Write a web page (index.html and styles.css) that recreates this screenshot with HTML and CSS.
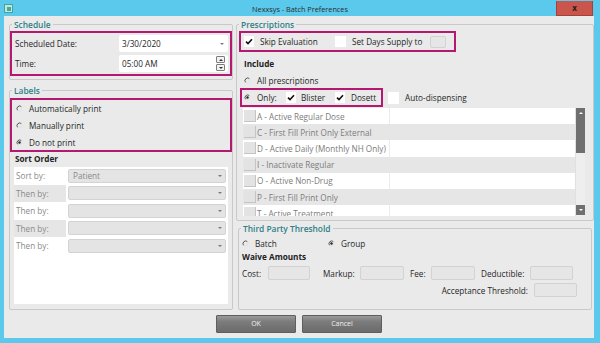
FILE: index.html
```html
<!DOCTYPE html>
<html>
<head>
<meta charset="utf-8">
<title>Nexxsys - Batch Preferences</title>
<link rel="stylesheet" href="styles.css">
</head>
<body>
<div class="window">
  <div class="titlebar">
    <div class="tb-left"><span class="app-icon"><span class="app-icon-inner"></span></span></div>
    <div class="title">Nexxsys - Batch Preferences</div>
    <div class="tb-right"><span class="close">x</span></div>
  </div>
  <div class="client">
    <div class="columns">
      <div class="col col-left">
        <fieldset class="group group-schedule">
          <legend>Schedule</legend>
          <div class="hl hl-schedule">
            <div class="field-row">
              <span class="field-label">Scheduled Date:</span>
              <div class="combo-white"><span class="combo-text">3/30/2020</span><i class="caret"></i></div>
            </div>
            <div class="field-row">
              <span class="field-label">Time:</span>
              <div class="combo-white"><span class="combo-text">05:00 AM</span>
                <span class="spin"><span class="spin-btn"><i class="tri-up"></i></span><span class="spin-btn"><i class="tri-down"></i></span></span>
              </div>
            </div>
          </div>
        </fieldset>
        <fieldset class="group group-labels">
          <legend>Labels</legend>
          <div class="hl hl-labels">
            <div class="radio-row"><svg class="radio" width="7" height="7" viewBox="0 0 7 7"><path d="M1.6 5.4 A2.7 2.7 0 0 1 5.4 1.6" stroke="#555" stroke-width="1" fill="none"/><path d="M5.4 1.6 A2.7 2.7 0 0 1 1.6 5.4" stroke="#e0e0e0" stroke-width="1" fill="none"/></svg><span>Automatically print</span></div>
            <div class="radio-row"><svg class="radio" width="7" height="7" viewBox="0 0 7 7"><path d="M1.6 5.4 A2.7 2.7 0 0 1 5.4 1.6" stroke="#555" stroke-width="1" fill="none"/><path d="M5.4 1.6 A2.7 2.7 0 0 1 1.6 5.4" stroke="#e0e0e0" stroke-width="1" fill="none"/></svg><span>Manually print</span></div>
            <div class="radio-row"><svg class="radio" width="7" height="7" viewBox="0 0 7 7"><path d="M1.6 5.4 A2.7 2.7 0 0 1 5.4 1.6" stroke="#555" stroke-width="1" fill="none"/><path d="M5.4 1.6 A2.7 2.7 0 0 1 1.6 5.4" stroke="#e0e0e0" stroke-width="1" fill="none"/><circle cx="3.5" cy="3.5" r="1.2" fill="#222"/></svg><span>Do not print</span></div>
          </div>
          <div class="bold-title sort-title">Sort Order</div>
          <div class="sort-table">
            <div class="sort-row"><span class="sort-label">Sort by:</span><div class="combo-gray"><span class="combo-text">Patient</span><i class="caret"></i></div></div>
            <div class="sort-row alt"><span class="sort-label">Then by:</span><div class="combo-gray"><span class="combo-text"></span><i class="caret"></i></div></div>
            <div class="sort-row"><span class="sort-label">Then by:</span><div class="combo-gray"><span class="combo-text"></span><i class="caret"></i></div></div>
            <div class="sort-row alt"><span class="sort-label">Then by:</span><div class="combo-gray"><span class="combo-text"></span><i class="caret"></i></div></div>
            <div class="sort-row"><span class="sort-label">Then by:</span><div class="combo-gray"><span class="combo-text"></span><i class="caret"></i></div></div>
          </div>
        </fieldset>
      </div>
      <div class="col col-right">
        <fieldset class="group group-rx">
          <legend>Prescriptions</legend>
          <div class="hl hl-rx1">
            <div class="opt opt-skip"><span class="check"><svg width="8" height="7" viewBox="0 0 8 7"><path d="M1 3.6 L3 5.6 L7 1.2" stroke="#111" stroke-width="1.6" fill="none"/></svg></span><span>Skip Evaluation</span></div>
            <div class="opt"><span class="check check-empty"></span><span>Set Days Supply to</span></div>
            <span class="days-input"></span>
          </div>
          <div class="bold-title include-title">Include</div>
          <div class="radio-row all-row"><svg class="radio" width="7" height="7" viewBox="0 0 7 7"><path d="M1.6 5.4 A2.7 2.7 0 0 1 5.4 1.6" stroke="#555" stroke-width="1" fill="none"/><path d="M5.4 1.6 A2.7 2.7 0 0 1 1.6 5.4" stroke="#e0e0e0" stroke-width="1" fill="none"/></svg><span>All prescriptions</span></div>
          <div class="only-line">
            <div class="hl hl-rx2">
              <div class="opt opt-only"><svg class="radio" width="7" height="7" viewBox="0 0 7 7"><path d="M1.6 5.4 A2.7 2.7 0 0 1 5.4 1.6" stroke="#555" stroke-width="1" fill="none"/><path d="M5.4 1.6 A2.7 2.7 0 0 1 1.6 5.4" stroke="#e0e0e0" stroke-width="1" fill="none"/><circle cx="3.5" cy="3.5" r="1.2" fill="#222"/></svg><span>Only:</span></div>
              <div class="opt opt-blister"><span class="check"><svg width="8" height="7" viewBox="0 0 8 7"><path d="M1 3.6 L3 5.6 L7 1.2" stroke="#111" stroke-width="1.6" fill="none"/></svg></span><span>Blister</span></div>
              <div class="opt opt-dosett"><span class="check"><svg width="8" height="7" viewBox="0 0 8 7"><path d="M1 3.6 L3 5.6 L7 1.2" stroke="#111" stroke-width="1.6" fill="none"/></svg></span><span>Dosett</span></div>
            </div>
            <div class="opt opt-auto"><span class="check check-empty check-big"></span><span>Auto-dispensing</span></div>
          </div>
          <div class="listbox">
            <div class="list-rows">
              <div class="list-row"><span class="list-cell"><span class="row-box"></span>A - Active Regular Dose</span></div>
              <div class="list-row alt"><span class="list-cell"><span class="row-box"></span>C - First Fill Print Only External</span></div>
              <div class="list-row"><span class="list-cell"><span class="row-box"></span>D - Active Daily (Monthly NH Only)</span></div>
              <div class="list-row alt"><span class="list-cell"><span class="row-box"></span>I - Inactivate Regular</span></div>
              <div class="list-row"><span class="list-cell"><span class="row-box"></span>O - Active Non-Drug</span></div>
              <div class="list-row alt"><span class="list-cell"><span class="row-box"></span>P - First Fill Print Only</span></div>
              <div class="list-row"><span class="list-cell"><span class="row-box"></span>T - Active Treatment</span></div>
            </div>
            <div class="scrollbar">
              <div class="thumb"><i class="tri-up white"></i></div>
              <div class="track"></div>
              <div class="sb-down"><i class="tri-down white"></i></div>
            </div>
          </div>
        </fieldset>
        <fieldset class="group group-tp">
          <legend>Third Party Threshold</legend>
          <div class="tp-radios">
            <div class="radio-row tp-batch"><svg class="radio" width="7" height="7" viewBox="0 0 7 7"><path d="M1.6 5.4 A2.7 2.7 0 0 1 5.4 1.6" stroke="#555" stroke-width="1" fill="none"/><path d="M5.4 1.6 A2.7 2.7 0 0 1 1.6 5.4" stroke="#e0e0e0" stroke-width="1" fill="none"/></svg><span>Batch</span></div>
            <div class="radio-row"><svg class="radio" width="7" height="7" viewBox="0 0 7 7"><path d="M1.6 5.4 A2.7 2.7 0 0 1 5.4 1.6" stroke="#555" stroke-width="1" fill="none"/><path d="M5.4 1.6 A2.7 2.7 0 0 1 1.6 5.4" stroke="#e0e0e0" stroke-width="1" fill="none"/><circle cx="3.5" cy="3.5" r="1.2" fill="#222"/></svg><span>Group</span></div>
          </div>
          <div class="bold-title waive-title">Waive Amounts</div>
          <div class="amount-row">
            <span class="amt-label w-cost">Cost:</span><span class="amt-input w42"></span>
            <span class="amt-label w-markup">Markup:</span><span class="amt-input w44"></span>
            <span class="amt-label w-fee">Fee:</span><span class="amt-input w44"></span>
            <span class="amt-label w-ded">Deductible:</span><span class="amt-input w43"></span>
          </div>
          <div class="amount-row accept-row">
            <span class="amt-label accept-label">Acceptance Threshold:</span><span class="amt-input w43"></span>
          </div>
        </fieldset>
      </div>
    </div>
    <div class="buttons">
      <span class="btn">OK</span>
      <span class="btn">Cancel</span>
    </div>
  </div>
</div>
</body>
</html>
```

FILE: styles.css
```css
html, body {
  margin: 0;
  padding: 0;
}
body {
  font-family: "Open Sans", "Noto Sans", sans-serif;
  font-size: 8.2px;
  color: #262626;
  background: #5bc9eb;
}
.window {
  width: 600px;
  height: 343px;
  background: #5bc9eb;
  display: flex;
  flex-direction: column;
  overflow: hidden;
}
.titlebar {
  height: 16px;
  display: grid;
  grid-template-columns: 1fr auto 1fr;
  align-items: center;
}
.tb-left {
  display: flex;
  align-items: center;
  padding-left: 4px;
}
.app-icon {
  width: 9px;
  height: 9px;
  box-sizing: border-box;
  border: 1px solid #4f9e9a;
  background: #b9ece0;
  display: flex;
  align-items: center;
  justify-content: center;
}
.app-icon-inner {
  width: 4px;
  height: 4px;
  background: #4aa79c;
}
.title {
  font-size: 7.3px;
  color: #2b2b2b;
  line-height: 16px;
  padding-top: 1px;
}
.tb-right {
  display: flex;
  justify-content: flex-end;
  align-items: flex-start;
  height: 16px;
  padding-right: 7px;
}
.close {
  width: 37px;
  height: 15px;
  box-sizing: border-box;
  background: #c9554c;
  border: 1px solid #a2423a;
  border-top: none;
  color: #1d1d1d;
  font-weight: 700;
  font-size: 8px;
  line-height: 14px;
  text-align: center;
}
.client {
  flex: 1;
  margin: 0 6px 5px 4px;
  background: #eaeaea;
  padding: 3px 0 0 5px;
  display: flex;
  flex-direction: column;
  min-height: 0;
}
.columns {
  flex: 1;
  display: flex;
  gap: 3px;
  min-height: 0;
}
.col {
  display: flex;
  flex-direction: column;
}
.col-left {
  width: 224px;
}
.col-right {
  width: 358px;
}
.group {
  margin: 0;
  padding: 0;
  min-width: 0;
  border: 1px solid #c9c9c9;
  border-radius: 2px;
  display: flex;
  flex-direction: column;
}
.group > legend {
  padding: 0 2px;
  margin-left: 2px;
  font-size: 8.4px;
  font-weight: 600;
  color: #2e7f87;
  line-height: 11px;
  height: 11px;
}
.group.group-schedule {
  flex: none;
}
.hl {
  border: 2px solid #b5186e;
}
.hl-schedule {
  margin: 1px 0 3px;
  height: 45px;
  flex: none;
  box-sizing: border-box;
  padding: 0 2px 0 3px;
  display: flex;
  flex-direction: column;
  justify-content: center;
  gap: 3px;
}
.field-row {
  display: flex;
  align-items: center;
  height: 17px;
  flex: none;
}
.field-label {
  flex: 1;
}
.combo-white {
  width: 109px;
  height: 17px;
  box-sizing: border-box;
  background: #fff;
  border-radius: 2px;
  display: flex;
  align-items: center;
  padding: 0 4px 0 3px;
}
.combo-text {
  flex: 1;
}
.caret {
  display: block;
  width: 0;
  height: 0;
  border-left: 2px solid transparent;
  border-right: 2px solid transparent;
  border-top: 2px solid #7a7a7a;
}
.spin {
  display: flex;
  flex-direction: column;
  gap: 1px;
  margin-right: -1px;
}
.spin-btn {
  width: 9px;
  height: 7px;
  box-sizing: border-box;
  border: 1px solid #7d7d7d;
  border-radius: 1px;
  background: #f2f2f2;
  display: flex;
  align-items: center;
  justify-content: center;
}
.tri-up {
  display: block;
  width: 0;
  height: 0;
  border-left: 2px solid transparent;
  border-right: 2px solid transparent;
  border-bottom: 2px solid #333;
}
.tri-down {
  display: block;
  width: 0;
  height: 0;
  border-left: 2px solid transparent;
  border-right: 2px solid transparent;
  border-top: 2px solid #333;
}
.tri-up.white {
  border-bottom-color: #fff;
}
.tri-down.white {
  border-top-color: #fff;
}
.group.group-labels {
  margin-top: 5px;
  flex: 1;
}
.hl-labels {
  margin-top: 2px;
  height: 54px;
  flex: none;
  box-sizing: border-box;
  padding: 0 3px;
  display: flex;
  flex-direction: column;
  justify-content: center;
}
.radio-row {
  display: flex;
  align-items: center;
  height: 17px;
  flex: none;
}
.radio {
  display: block;
  flex: none;
  margin-right: 6px;
  margin-left: 1px;
}
.bold-title {
  font-weight: 700;
  line-height: 12px;
  color: #222;
  flex: none;
}
.sort-title {
  padding-left: 5px;
  margin-top: 1px;
}
.sort-table {
  flex: 1;
  margin: 2px 4px 5px;
  background: #fff;
}
.sort-row {
  height: 17.5px;
  display: flex;
  align-items: center;
}
.sort-label {
  width: 52px;
  height: 100%;
  box-sizing: border-box;
  padding-left: 2px;
  display: flex;
  align-items: center;
  color: #8a8a8a;
}
.sort-row.alt .sort-label {
  background: #e6e6e6;
}
.combo-gray {
  margin-left: 2px;
  width: 158px;
  height: 14px;
  box-sizing: border-box;
  background: #e4e4e4;
  border: 1px solid #d3d3d3;
  border-radius: 2px;
  display: flex;
  align-items: center;
  padding: 0 3px 0 4px;
  color: #8a8a8a;
}
.opt {
  display: flex;
  align-items: center;
}
.check {
  flex: none;
  width: 10px;
  height: 11px;
  box-sizing: border-box;
  background: #fff;
  display: flex;
  align-items: center;
  justify-content: center;
  margin-right: 6px;
}
.check svg {
  display: block;
}
.check-big {
  width: 11px;
  height: 12px;
}
.hl-rx1 {
  margin: 1px 0 0 2px;
  width: 217px;
  height: 21px;
  flex: none;
  box-sizing: border-box;
  padding-left: 3px;
  display: flex;
  align-items: center;
}
.opt-skip {
  width: 91px;
}
.hl-rx1 .check-empty {
  width: 11px;
}
.days-input {
  margin-left: 8px;
  width: 16px;
  height: 12px;
  box-sizing: border-box;
  border: 1px solid #d2d2d2;
  border-radius: 2px;
  background: #e6e6e6;
}
.include-title {
  margin-top: 6px;
  padding-left: 7px;
}
.all-row {
  margin-top: 2px;
  height: 16px;
  padding-left: 6px;
}
.only-line {
  display: flex;
  align-items: center;
  flex: none;
}
.hl-rx2 {
  margin-left: 3px;
  width: 143px;
  height: 19px;
  box-sizing: border-box;
  padding-left: 1px;
  display: flex;
  align-items: center;
}
.opt-only {
  width: 43px;
}
.opt-blister {
  width: 49px;
}
.opt-blister .check {
  margin-right: 5px;
}
.opt-auto {
  margin-left: 5px;
}
.listbox {
  margin: 1px 8px 4px 6px;
  height: 108px;
  flex: none;
  display: flex;
  background: #fff;
  overflow: hidden;
}
.list-rows {
  flex: 1;
  overflow: hidden;
}
.list-row {
  height: 16.2px;
  display: flex;
  align-items: stretch;
  color: #7c7c7c;
}
.list-row.alt {
  background: #e6e6e6;
}
.list-cell {
  width: 147px;
  box-sizing: border-box;
  border-right: 1px solid #ececec;
  display: flex;
  align-items: center;
  white-space: nowrap;
}
.list-row.alt .list-cell {
  border-right-color: #e6e6e6;
}
.row-box {
  flex: none;
  width: 12px;
  height: 12px;
  box-sizing: border-box;
  margin: 0 1px 0 1px;
  background: #e3e3e3;
  border-right: 1px solid #c4c4c4;
  border-bottom: 1px solid #c4c4c4;
}
.scrollbar {
  width: 9px;
  display: flex;
  flex-direction: column;
  background: #eeeeee;
  border-left: 1px solid #e0e0e0;
}
.thumb {
  height: 45px;
  background: #6f6f6f;
  display: flex;
  justify-content: center;
  padding-top: 4px;
  box-sizing: border-box;
}
.track {
  flex: 1;
}
.sb-down {
  height: 10px;
  margin-bottom: 1px;
  background: #6f6f6f;
  display: flex;
  align-items: center;
  justify-content: center;
}
.group.group-rx {
  flex: none;
}
.group.group-tp {
  margin: 2px 2px 0;
  flex: 1;
}
.tp-radios {
  margin-top: 1px;
  height: 16px;
  flex: none;
  display: flex;
  align-items: center;
  padding-left: 2px;
}
.tp-batch {
  width: 86px;
}
.waive-title {
  padding-left: 3px;
}
.amount-row {
  margin-top: 2px;
  height: 16px;
  flex: none;
  display: flex;
  align-items: center;
  padding-left: 3px;
}
.amt-label {
  flex: none;
  box-sizing: border-box;
  white-space: nowrap;
}
.w-cost { width: 26px; }
.w-markup { width: 50px; padding-left: 13px; }
.w-fee { width: 27px; padding-left: 6px; }
.w-ded { width: 55px; padding-left: 6px; }
.amt-input {
  flex: none;
  height: 14px;
  box-sizing: border-box;
  border: 1px solid #d2d2d2;
  border-radius: 2px;
  background: #e6e6e6;
}
.w42 { width: 42px; }
.w43 { width: 43px; }
.w44 { width: 44px; }
.accept-row {
  margin-top: 1px;
  justify-content: flex-end;
  padding-right: 14px;
}
.accept-label {
  margin-right: 6px;
}
.buttons {
  height: 18px;
  margin: 5px 0 5px;
  display: flex;
  justify-content: center;
  gap: 6px;
  padding-right: 5px;
}
.btn {
  width: 80px;
  height: 18px;
  box-sizing: border-box;
  border: 1px solid #5e5e5e;
  border-radius: 1px;
  background: linear-gradient(#9a9a9a 0%, #7c7c7c 35%, #6b6b6b 100%);
  color: #f2f2f2;
  font-size: 7px;
  line-height: 16px;
  text-align: center;
}
```
